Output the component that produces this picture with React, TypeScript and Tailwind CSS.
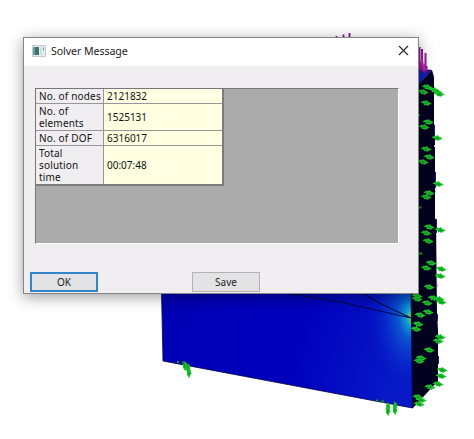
import { X } from 'lucide-react';

const rows = [
    { label: 'No. of nodes', value: '2121832', height: 'h-[14px]' },
    { label: 'No. of elements', value: '1525131', height: 'h-[27px]' },
    { label: 'No. of DOF', value: '6316017', height: 'h-[15px]' },
    { label: 'Total solution time', value: '00:07:48', height: 'h-[39px]' },
];

// Fixture markers along the side face of the part
const fixtures = [
    [427, 87], [423, 92], [434, 90], [437, 92], [439, 94], [426, 103], [428, 122], [424, 127],
    [437, 138], [426, 149], [429, 157], [423, 162], [438, 184], [429, 193], [426, 197],
    [429, 227], [440, 230], [426, 233], [428, 241], [431, 263], [426, 268], [441, 269],
    [440, 276], [429, 287], [417, 296], [417, 299], [433, 298], [439, 299], [441, 302], [427, 303], [428, 312],
    [420, 315], [418, 324], [416, 329], [440, 337], [438, 341], [429, 350], [421, 358],
    [419, 361], [442, 370], [441, 376], [438, 384], [430, 387], [418, 397], [421, 400], [419, 404],
];

const fixturesBelow = [[185, 366], [188, 368], [189, 373], [388, 407], [388, 411], [395, 406], [395, 410]];

function ModelView() {
    return (
        <svg width="474" height="439" viewBox="0 0 474 439" className="block">
            <defs>
                <linearGradient id="face" x1="0" x2="1" y1="0" y2="0.15">
                    <stop offset="0" stopColor="#0000b4" />
                    <stop offset="0.6" stopColor="#0000bd" />
                    <stop offset="1" stopColor="#0718c6" />
                </linearGradient>
                <radialGradient id="stress" gradientUnits="userSpaceOnUse" cx="0" cy="0" r="1" gradientTransform="translate(411 317) scale(46 78)">
                    <stop offset="0" stopColor="#36d6b0" />
                    <stop offset="0.1" stopColor="#12a3d2" />
                    <stop offset="0.28" stopColor="#0a62d0" stopOpacity="0.85" />
                    <stop offset="0.6" stopColor="#0a3bcf" stopOpacity="0.45" />
                    <stop offset="1" stopColor="#0010c4" stopOpacity="0" />
                </radialGradient>
                <g id="fixture">
                    <path d="M-5.6-.6 L-2.2-2.6 L-.6-2 L.6-3 L1.8-1.8 L2.8-1 L5.8.6 L2.8 2 L1 3 L.2 1.9 L-2 2.3 L-2.6.6Z" fill="#1cc02c" />
                    <path d="M-2 .2 L2.4.7 M.4-1.2 V1.4" stroke="#0a8a18" strokeWidth="0.6" />
                </g>
            </defs>

            {/* side face */}
            <path d="M411 69 L432 70 L434 77 V124 L435 126 V218 L436 220 L437 314 L438 330 V381 L413 408 L411 407Z" fill="#020220" />
            <path d="M434.5 125 V135 M435.5 172 V188 M436.5 219 V233 M437.5 314 V321 M438.5 356 V364" stroke="#1a1a8c" />
            <path d="M411 69 L432 70 L427 76 L418 85 L411 91Z" fill="#1422b4" />
            <path d="M418 69 L432 70 L428 74Z" fill="#3a1478" />

            {/* front face */}
            <path d="M161.5 285 H411 L412.5 408 L163 361Z" fill="url(#face)" />
            <path d="M300 285 H411 L412.5 408 L300 387Z" fill="url(#stress)" />
            <path d="M411 308 L408.5 314 L408 318 L409 322 L411 326Z" fill="#39c66b" />
            <path d="M411 312 L409 317 L411 321Z" fill="#a8c832" />
            <path d="M284 293 L340 302 L411 318 M362 293 L381 304 L411 318" fill="none" stroke="#020a45" strokeWidth="1.1" />
            <path d="M161.5 292 L163 361 L412.5 408 L411 292" fill="none" stroke="#00003c" strokeWidth="0.8" />

            {/* pressure load arrows */}
            <path d="M336.5 36 V37 M343.5 34.5 V37 M349.5 33 V37" stroke="#7a1285" strokeWidth="1.8" />
            <path d="M419.5 47 V69 M422 49 V70 M425.5 53 V71" stroke="#9c1a9c" strokeWidth="2" />
            <path d="M418 59 L428 67 L425 73 L418 68Z" fill="#a015a0" />
            <path d="M420.5 58 L423 66 M424 60 V70" stroke="#d65bd6" strokeWidth="0.8" />

            {fixtures.map(([x, y]) => (
                <use key={`${x}-${y}`} href="#fixture" x={x} y={y} />
            ))}
            {fixturesBelow.map(([x, y]) => (
                <use key={`${x}-${y}`} href="#fixture" transform={`translate(${x} ${y}) rotate(80) scale(0.9)`} />
            ))}
            <path d="M418 115 h2 M418.5 207.5 h3 M419 253.5 h3.5 M376 400.5 h2 M381 401.5 h3 M177 362 h2 M182 362.5 h3" stroke="#159c22" strokeWidth="1.8" />
            <path d="M434.5 145 V147 M435.5 190 V192 M436.5 235 V237 M436.5 241 V243 M437.5 284 V287" stroke="#bcbce0" />
        </svg>
    );
}

function SolverDialog() {
    return (
        <div className="absolute left-[23px] top-[37px] flex h-[257px] w-[396px] flex-col border border-[#858585] bg-[#f0eef1] shadow-[0_3px_14px_rgba(0,0,0,0.38)]">
            <div className="flex h-[28px] shrink-0 items-center bg-white pr-[6px] pl-[8px]">
                <svg width="14" height="12" viewBox="0 0 14 12" className="mb-[2px] shrink-0">
                    <rect x="0.5" y="0.5" width="13" height="11" fill="#e6ecee" stroke="#c4cccf" />
                    <rect x="1" y="2" width="6" height="8" fill="#3c7475" />
                    <rect x="1" y="2" width="2" height="8" fill="#6f9da0" />
                    <rect x="8" y="2" width="2" height="8" fill="#bfe1df" />
                    <path d="M11.5 2.5 v3" stroke="#7e999b" />
                </svg>
                <span className="ml-[5px] text-[10.6px] tracking-[-0.07px] whitespace-nowrap text-[#222]">Solver Message</span>
                <button className="mb-[3px] ml-auto text-[#222]">
                    <X size={17} strokeWidth={1.6} />
                </button>
            </div>

            <div className="mt-[22px] ml-[11px] h-[156px] w-[364px] shrink-0 border-t border-r border-b border-l border-t-[#77777b] border-r-white border-b-white border-l-[#77777b] bg-[#ababab]">
                <div className="flex w-[188px] flex-col border-r-2 border-b-2 border-[#7c7c80]">
                    {rows.map((row, i) => (
                        <div key={row.label} className={`flex ${row.height} ${i > 0 ? 'border-t border-[#97979a]' : ''}`}>
                            <div className="flex w-[68px] shrink-0 items-center border-r border-[#97979a] bg-[#f0eef1] pl-[3px]">
                                <span className="-mr-[2px] w-[63px] shrink-0 pr-px text-[10px] leading-[12px] tracking-[0.17px] text-[#111]">{row.label}</span>
                            </div>
                            <div className="flex flex-1 items-center bg-[#ffffe1] pl-[3px] text-[10px] leading-[12px] text-[#111]">
                                {row.value}
                            </div>
                        </div>
                    ))}
                </div>
            </div>

            <div className="mt-[28px] ml-[6px] flex items-start gap-[94px] text-[10px] text-[#222]">
                <button className="flex h-[20px] w-[68px] items-center justify-center border-2 border-[#2f86cc] bg-[#e3e2e4]">OK</button>
                <button className="flex h-[20px] w-[68px] items-center justify-center border border-[#b3b2b4] bg-[#e3e2e4]">Save</button>
            </div>
        </div>
    );
}

export default function App() {
    return (
        <div className="relative h-[439px] w-[474px] overflow-hidden bg-white font-['Noto_Sans','Open_Sans',sans-serif]">
            <ModelView />
            <SolverDialog />
        </div>
    );
}
